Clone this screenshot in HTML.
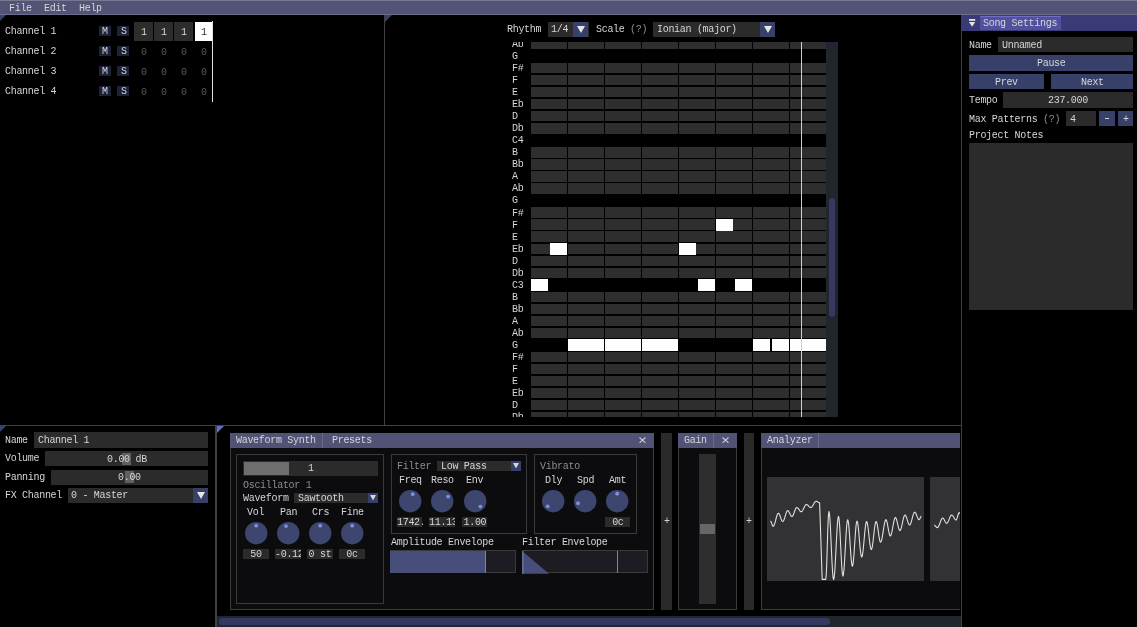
<!DOCTYPE html><html><head><meta charset="utf-8"><style>
html,body{margin:0;padding:0;background:#000;width:1137px;height:627px;overflow:hidden;position:relative}
div{position:absolute}
.t{font-family:"Liberation Mono",monospace;font-size:10px;letter-spacing:-0.3px;line-height:10px;white-space:pre;will-change:transform}
svg{position:absolute}
</style></head><body>
<div style="left:0px;top:0px;width:1137px;height:15px;background:#535375;"></div>
<div style="left:0px;top:0px;width:1137px;height:1px;background:#77778f;"></div>
<div style="left:0px;top:14px;width:1137px;height:1px;background:#6c6c8c;"></div>
<div class="t" style="left:8.5px;top:3.6999999999999993px;color:#d6d6d6;">File</div>
<div class="t" style="left:43.7px;top:3.6999999999999993px;color:#d6d6d6;">Edit</div>
<div class="t" style="left:78.9px;top:3.6999999999999993px;color:#d6d6d6;">Help</div>
<div style="left:383.7px;top:15px;width:1.5px;height:410px;background:#404040;"></div>
<div style="left:960.8px;top:15px;width:1.5px;height:612px;background:#404040;"></div>
<div style="left:0px;top:424.5px;width:961px;height:1.5px;background:#404040;"></div>
<div style="left:215.4px;top:426px;width:1.5px;height:201px;background:#404040;"></div>
<svg style="position:absolute;left:0px;top:15px" width="6" height="6"><polygon points="0,0 6,0 0,6" fill="#36426a"/></svg>
<svg style="position:absolute;left:385px;top:15px" width="7" height="7"><polygon points="0,0 7,0 0,7" fill="#36426a"/></svg>
<svg style="position:absolute;left:0px;top:426px" width="6" height="6"><polygon points="0,0 6,0 0,6" fill="#36426a"/></svg>
<svg style="position:absolute;left:217px;top:426px" width="7" height="7"><polygon points="0,0 7,0 0,7" fill="#6070c8"/></svg>
<div class="t" style="left:5.1px;top:27.0px;color:#d6d6d6;">Channel 1</div>
<div style="left:99px;top:25.8px;width:12px;height:10.2px;background:#1c2238;"></div>
<div class="t" style="left:101.5px;top:27.0px;color:#d6d6d6;">M</div>
<div style="left:117.3px;top:25.8px;width:12.2px;height:10.2px;background:#1c2238;"></div>
<div class="t" style="left:120.5px;top:27.0px;color:#d6d6d6;">S</div>
<div style="left:134.1px;top:22.4px;width:18.5px;height:18.4px;background:#2d2d2d;"></div>
<div class="t" style="left:140.5px;top:28px;color:#d6d6d6;">1</div>
<div style="left:154.2px;top:22.4px;width:18.5px;height:18.4px;background:#2d2d2d;"></div>
<div class="t" style="left:160.6px;top:28px;color:#d6d6d6;">1</div>
<div style="left:174.3px;top:22.4px;width:18.5px;height:18.4px;background:#2d2d2d;"></div>
<div class="t" style="left:180.7px;top:28px;color:#d6d6d6;">1</div>
<div style="left:194.6px;top:21.9px;width:18.4px;height:18.9px;background:#ffffff;"></div>
<div class="t" style="left:201.0px;top:28px;color:#303030;">1</div>
<div class="t" style="left:5.1px;top:47.07px;color:#d6d6d6;">Channel 2</div>
<div style="left:99px;top:45.870000000000005px;width:12px;height:10.2px;background:#1c2238;"></div>
<div class="t" style="left:101.5px;top:47.07px;color:#d6d6d6;">M</div>
<div style="left:117.3px;top:45.870000000000005px;width:12.2px;height:10.2px;background:#1c2238;"></div>
<div class="t" style="left:120.5px;top:47.07px;color:#d6d6d6;">S</div>
<div class="t" style="left:140.5px;top:48.07px;color:#5a5a5a;">0</div>
<div class="t" style="left:160.6px;top:48.07px;color:#5a5a5a;">0</div>
<div class="t" style="left:180.7px;top:48.07px;color:#5a5a5a;">0</div>
<div class="t" style="left:200.8px;top:48.07px;color:#5a5a5a;">0</div>
<div class="t" style="left:5.1px;top:67.14px;color:#d6d6d6;">Channel 3</div>
<div style="left:99px;top:65.94px;width:12px;height:10.2px;background:#1c2238;"></div>
<div class="t" style="left:101.5px;top:67.14px;color:#d6d6d6;">M</div>
<div style="left:117.3px;top:65.94px;width:12.2px;height:10.2px;background:#1c2238;"></div>
<div class="t" style="left:120.5px;top:67.14px;color:#d6d6d6;">S</div>
<div class="t" style="left:140.5px;top:68.14px;color:#5a5a5a;">0</div>
<div class="t" style="left:160.6px;top:68.14px;color:#5a5a5a;">0</div>
<div class="t" style="left:180.7px;top:68.14px;color:#5a5a5a;">0</div>
<div class="t" style="left:200.8px;top:68.14px;color:#5a5a5a;">0</div>
<div class="t" style="left:5.1px;top:87.21000000000001px;color:#d6d6d6;">Channel 4</div>
<div style="left:99px;top:86.01px;width:12px;height:10.2px;background:#1c2238;"></div>
<div class="t" style="left:101.5px;top:87.21000000000001px;color:#d6d6d6;">M</div>
<div style="left:117.3px;top:86.01px;width:12.2px;height:10.2px;background:#1c2238;"></div>
<div class="t" style="left:120.5px;top:87.21000000000001px;color:#d6d6d6;">S</div>
<div class="t" style="left:140.5px;top:88.21000000000001px;color:#5a5a5a;">0</div>
<div class="t" style="left:160.6px;top:88.21000000000001px;color:#5a5a5a;">0</div>
<div class="t" style="left:180.7px;top:88.21000000000001px;color:#5a5a5a;">0</div>
<div class="t" style="left:200.8px;top:88.21000000000001px;color:#5a5a5a;">0</div>
<div style="left:212px;top:21.2px;width:1.1px;height:80.8px;background:#e0e0e0;"></div>
<div class="t" style="left:507.4px;top:25.200000000000003px;color:#d6d6d6;">Rhythm</div>
<div style="left:547.5px;top:22.1px;width:41px;height:14.5px;background:#2b2b2b;"></div>
<div style="left:573.4px;top:22.1px;width:15px;height:14.5px;background:#374068;"></div>
<div class="t" style="left:551px;top:25.200000000000003px;color:#d6d6d6;">1/4</div>
<div class="t" style="left:595.5px;top:25.200000000000003px;color:#d6d6d6;">Scale</div>
<div class="t" style="left:629.5px;top:25.200000000000003px;color:#8e8e8e;">(?)</div>
<div style="left:653px;top:22.1px;width:122px;height:14.5px;background:#2b2b2b;"></div>
<div style="left:760px;top:22.1px;width:15px;height:14.5px;background:#374068;"></div>
<div class="t" style="left:657px;top:25.200000000000003px;color:#d6d6d6;">Ionian (major)</div>
<svg style="position:absolute;left:576.9px;top:25.9px" width="8" height="7"><polygon points="0,0 8,0 4.0,7" fill="#e6e6e6"/></svg>
<svg style="position:absolute;left:763.5px;top:25.9px" width="8" height="7"><polygon points="0,0 8,0 4.0,7" fill="#e6e6e6"/></svg>
<div style="left:500px;top:42px;width:338px;height:375px;overflow:hidden">
<div class="t" style="left:11.899999999999977px;top:-1.9000000000000004px;color:#d6d6d6;">Ab</div>
<div style="left:31.3px;top:-3.0px;width:35.7px;height:10.3px;background:#2e2e2e;"></div>
<div style="left:68.3px;top:-3.0px;width:35.7px;height:10.3px;background:#2e2e2e;"></div>
<div style="left:105.3px;top:-3.0px;width:35.7px;height:10.3px;background:#2e2e2e;"></div>
<div style="left:142.3px;top:-3.0px;width:35.7px;height:10.3px;background:#2e2e2e;"></div>
<div style="left:179.3px;top:-3.0px;width:35.7px;height:10.3px;background:#2e2e2e;"></div>
<div style="left:216.3px;top:-3.0px;width:35.7px;height:10.3px;background:#2e2e2e;"></div>
<div style="left:253.3px;top:-3.0px;width:35.7px;height:10.3px;background:#2e2e2e;"></div>
<div style="left:290.3px;top:-3.0px;width:35.7px;height:10.3px;background:#2e2e2e;"></div>
<div class="t" style="left:11.899999999999977px;top:10.129999999999999px;color:#d6d6d6;">G</div>
<div class="t" style="left:11.899999999999977px;top:22.159999999999997px;color:#d6d6d6;">F#</div>
<div style="left:31.3px;top:21.06px;width:35.7px;height:10.3px;background:#2e2e2e;"></div>
<div style="left:68.3px;top:21.06px;width:35.7px;height:10.3px;background:#2e2e2e;"></div>
<div style="left:105.3px;top:21.06px;width:35.7px;height:10.3px;background:#2e2e2e;"></div>
<div style="left:142.3px;top:21.06px;width:35.7px;height:10.3px;background:#2e2e2e;"></div>
<div style="left:179.3px;top:21.06px;width:35.7px;height:10.3px;background:#2e2e2e;"></div>
<div style="left:216.3px;top:21.06px;width:35.7px;height:10.3px;background:#2e2e2e;"></div>
<div style="left:253.3px;top:21.06px;width:35.7px;height:10.3px;background:#2e2e2e;"></div>
<div style="left:290.3px;top:21.06px;width:35.7px;height:10.3px;background:#2e2e2e;"></div>
<div class="t" style="left:11.899999999999977px;top:34.19px;color:#d6d6d6;">F</div>
<div style="left:31.3px;top:33.09px;width:35.7px;height:10.3px;background:#2e2e2e;"></div>
<div style="left:68.3px;top:33.09px;width:35.7px;height:10.3px;background:#2e2e2e;"></div>
<div style="left:105.3px;top:33.09px;width:35.7px;height:10.3px;background:#2e2e2e;"></div>
<div style="left:142.3px;top:33.09px;width:35.7px;height:10.3px;background:#2e2e2e;"></div>
<div style="left:179.3px;top:33.09px;width:35.7px;height:10.3px;background:#2e2e2e;"></div>
<div style="left:216.3px;top:33.09px;width:35.7px;height:10.3px;background:#2e2e2e;"></div>
<div style="left:253.3px;top:33.09px;width:35.7px;height:10.3px;background:#2e2e2e;"></div>
<div style="left:290.3px;top:33.09px;width:35.7px;height:10.3px;background:#2e2e2e;"></div>
<div class="t" style="left:11.899999999999977px;top:46.22px;color:#d6d6d6;">E</div>
<div style="left:31.3px;top:45.12px;width:35.7px;height:10.3px;background:#2e2e2e;"></div>
<div style="left:68.3px;top:45.12px;width:35.7px;height:10.3px;background:#2e2e2e;"></div>
<div style="left:105.3px;top:45.12px;width:35.7px;height:10.3px;background:#2e2e2e;"></div>
<div style="left:142.3px;top:45.12px;width:35.7px;height:10.3px;background:#2e2e2e;"></div>
<div style="left:179.3px;top:45.12px;width:35.7px;height:10.3px;background:#2e2e2e;"></div>
<div style="left:216.3px;top:45.12px;width:35.7px;height:10.3px;background:#2e2e2e;"></div>
<div style="left:253.3px;top:45.12px;width:35.7px;height:10.3px;background:#2e2e2e;"></div>
<div style="left:290.3px;top:45.12px;width:35.7px;height:10.3px;background:#2e2e2e;"></div>
<div class="t" style="left:11.899999999999977px;top:58.25px;color:#d6d6d6;">Eb</div>
<div style="left:31.3px;top:57.15px;width:35.7px;height:10.3px;background:#2e2e2e;"></div>
<div style="left:68.3px;top:57.15px;width:35.7px;height:10.3px;background:#2e2e2e;"></div>
<div style="left:105.3px;top:57.15px;width:35.7px;height:10.3px;background:#2e2e2e;"></div>
<div style="left:142.3px;top:57.15px;width:35.7px;height:10.3px;background:#2e2e2e;"></div>
<div style="left:179.3px;top:57.15px;width:35.7px;height:10.3px;background:#2e2e2e;"></div>
<div style="left:216.3px;top:57.15px;width:35.7px;height:10.3px;background:#2e2e2e;"></div>
<div style="left:253.3px;top:57.15px;width:35.7px;height:10.3px;background:#2e2e2e;"></div>
<div style="left:290.3px;top:57.15px;width:35.7px;height:10.3px;background:#2e2e2e;"></div>
<div class="t" style="left:11.899999999999977px;top:70.27999999999999px;color:#d6d6d6;">D</div>
<div style="left:31.3px;top:69.18px;width:35.7px;height:10.3px;background:#2e2e2e;"></div>
<div style="left:68.3px;top:69.18px;width:35.7px;height:10.3px;background:#2e2e2e;"></div>
<div style="left:105.3px;top:69.18px;width:35.7px;height:10.3px;background:#2e2e2e;"></div>
<div style="left:142.3px;top:69.18px;width:35.7px;height:10.3px;background:#2e2e2e;"></div>
<div style="left:179.3px;top:69.18px;width:35.7px;height:10.3px;background:#2e2e2e;"></div>
<div style="left:216.3px;top:69.18px;width:35.7px;height:10.3px;background:#2e2e2e;"></div>
<div style="left:253.3px;top:69.18px;width:35.7px;height:10.3px;background:#2e2e2e;"></div>
<div style="left:290.3px;top:69.18px;width:35.7px;height:10.3px;background:#2e2e2e;"></div>
<div class="t" style="left:11.899999999999977px;top:82.30999999999999px;color:#d6d6d6;">Db</div>
<div style="left:31.3px;top:81.21px;width:35.7px;height:10.3px;background:#2e2e2e;"></div>
<div style="left:68.3px;top:81.21px;width:35.7px;height:10.3px;background:#2e2e2e;"></div>
<div style="left:105.3px;top:81.21px;width:35.7px;height:10.3px;background:#2e2e2e;"></div>
<div style="left:142.3px;top:81.21px;width:35.7px;height:10.3px;background:#2e2e2e;"></div>
<div style="left:179.3px;top:81.21px;width:35.7px;height:10.3px;background:#2e2e2e;"></div>
<div style="left:216.3px;top:81.21px;width:35.7px;height:10.3px;background:#2e2e2e;"></div>
<div style="left:253.3px;top:81.21px;width:35.7px;height:10.3px;background:#2e2e2e;"></div>
<div style="left:290.3px;top:81.21px;width:35.7px;height:10.3px;background:#2e2e2e;"></div>
<div class="t" style="left:11.899999999999977px;top:94.33999999999999px;color:#d6d6d6;">C4</div>
<div class="t" style="left:11.899999999999977px;top:106.36999999999999px;color:#d6d6d6;">B</div>
<div style="left:31.3px;top:105.27px;width:35.7px;height:10.3px;background:#2e2e2e;"></div>
<div style="left:68.3px;top:105.27px;width:35.7px;height:10.3px;background:#2e2e2e;"></div>
<div style="left:105.3px;top:105.27px;width:35.7px;height:10.3px;background:#2e2e2e;"></div>
<div style="left:142.3px;top:105.27px;width:35.7px;height:10.3px;background:#2e2e2e;"></div>
<div style="left:179.3px;top:105.27px;width:35.7px;height:10.3px;background:#2e2e2e;"></div>
<div style="left:216.3px;top:105.27px;width:35.7px;height:10.3px;background:#2e2e2e;"></div>
<div style="left:253.3px;top:105.27px;width:35.7px;height:10.3px;background:#2e2e2e;"></div>
<div style="left:290.3px;top:105.27px;width:35.7px;height:10.3px;background:#2e2e2e;"></div>
<div class="t" style="left:11.899999999999977px;top:118.39999999999999px;color:#d6d6d6;">Bb</div>
<div style="left:31.3px;top:117.3px;width:35.7px;height:10.3px;background:#2e2e2e;"></div>
<div style="left:68.3px;top:117.3px;width:35.7px;height:10.3px;background:#2e2e2e;"></div>
<div style="left:105.3px;top:117.3px;width:35.7px;height:10.3px;background:#2e2e2e;"></div>
<div style="left:142.3px;top:117.3px;width:35.7px;height:10.3px;background:#2e2e2e;"></div>
<div style="left:179.3px;top:117.3px;width:35.7px;height:10.3px;background:#2e2e2e;"></div>
<div style="left:216.3px;top:117.3px;width:35.7px;height:10.3px;background:#2e2e2e;"></div>
<div style="left:253.3px;top:117.3px;width:35.7px;height:10.3px;background:#2e2e2e;"></div>
<div style="left:290.3px;top:117.3px;width:35.7px;height:10.3px;background:#2e2e2e;"></div>
<div class="t" style="left:11.899999999999977px;top:130.42999999999998px;color:#d6d6d6;">A</div>
<div style="left:31.3px;top:129.33px;width:35.7px;height:10.3px;background:#2e2e2e;"></div>
<div style="left:68.3px;top:129.33px;width:35.7px;height:10.3px;background:#2e2e2e;"></div>
<div style="left:105.3px;top:129.33px;width:35.7px;height:10.3px;background:#2e2e2e;"></div>
<div style="left:142.3px;top:129.33px;width:35.7px;height:10.3px;background:#2e2e2e;"></div>
<div style="left:179.3px;top:129.33px;width:35.7px;height:10.3px;background:#2e2e2e;"></div>
<div style="left:216.3px;top:129.33px;width:35.7px;height:10.3px;background:#2e2e2e;"></div>
<div style="left:253.3px;top:129.33px;width:35.7px;height:10.3px;background:#2e2e2e;"></div>
<div style="left:290.3px;top:129.33px;width:35.7px;height:10.3px;background:#2e2e2e;"></div>
<div class="t" style="left:11.899999999999977px;top:142.45999999999998px;color:#d6d6d6;">Ab</div>
<div style="left:31.3px;top:141.36px;width:35.7px;height:10.3px;background:#2e2e2e;"></div>
<div style="left:68.3px;top:141.36px;width:35.7px;height:10.3px;background:#2e2e2e;"></div>
<div style="left:105.3px;top:141.36px;width:35.7px;height:10.3px;background:#2e2e2e;"></div>
<div style="left:142.3px;top:141.36px;width:35.7px;height:10.3px;background:#2e2e2e;"></div>
<div style="left:179.3px;top:141.36px;width:35.7px;height:10.3px;background:#2e2e2e;"></div>
<div style="left:216.3px;top:141.36px;width:35.7px;height:10.3px;background:#2e2e2e;"></div>
<div style="left:253.3px;top:141.36px;width:35.7px;height:10.3px;background:#2e2e2e;"></div>
<div style="left:290.3px;top:141.36px;width:35.7px;height:10.3px;background:#2e2e2e;"></div>
<div class="t" style="left:11.899999999999977px;top:154.48999999999998px;color:#d6d6d6;">G</div>
<div class="t" style="left:11.899999999999977px;top:166.51999999999998px;color:#d6d6d6;">F#</div>
<div style="left:31.3px;top:165.42px;width:35.7px;height:10.3px;background:#2e2e2e;"></div>
<div style="left:68.3px;top:165.42px;width:35.7px;height:10.3px;background:#2e2e2e;"></div>
<div style="left:105.3px;top:165.42px;width:35.7px;height:10.3px;background:#2e2e2e;"></div>
<div style="left:142.3px;top:165.42px;width:35.7px;height:10.3px;background:#2e2e2e;"></div>
<div style="left:179.3px;top:165.42px;width:35.7px;height:10.3px;background:#2e2e2e;"></div>
<div style="left:216.3px;top:165.42px;width:35.7px;height:10.3px;background:#2e2e2e;"></div>
<div style="left:253.3px;top:165.42px;width:35.7px;height:10.3px;background:#2e2e2e;"></div>
<div style="left:290.3px;top:165.42px;width:35.7px;height:10.3px;background:#2e2e2e;"></div>
<div class="t" style="left:11.899999999999977px;top:178.54999999999998px;color:#d6d6d6;">F</div>
<div style="left:31.3px;top:177.45px;width:35.7px;height:10.3px;background:#2e2e2e;"></div>
<div style="left:68.3px;top:177.45px;width:35.7px;height:10.3px;background:#2e2e2e;"></div>
<div style="left:105.3px;top:177.45px;width:35.7px;height:10.3px;background:#2e2e2e;"></div>
<div style="left:142.3px;top:177.45px;width:35.7px;height:10.3px;background:#2e2e2e;"></div>
<div style="left:179.3px;top:177.45px;width:35.7px;height:10.3px;background:#2e2e2e;"></div>
<div style="left:216.3px;top:177.45px;width:35.7px;height:10.3px;background:#2e2e2e;"></div>
<div style="left:253.3px;top:177.45px;width:35.7px;height:10.3px;background:#2e2e2e;"></div>
<div style="left:290.3px;top:177.45px;width:35.7px;height:10.3px;background:#2e2e2e;"></div>
<div style="left:216.3px;top:176.6px;width:17.2px;height:12.0px;background:#ffffff;"></div>
<div class="t" style="left:11.899999999999977px;top:190.57999999999998px;color:#d6d6d6;">E</div>
<div style="left:31.3px;top:189.48px;width:35.7px;height:10.3px;background:#2e2e2e;"></div>
<div style="left:68.3px;top:189.48px;width:35.7px;height:10.3px;background:#2e2e2e;"></div>
<div style="left:105.3px;top:189.48px;width:35.7px;height:10.3px;background:#2e2e2e;"></div>
<div style="left:142.3px;top:189.48px;width:35.7px;height:10.3px;background:#2e2e2e;"></div>
<div style="left:179.3px;top:189.48px;width:35.7px;height:10.3px;background:#2e2e2e;"></div>
<div style="left:216.3px;top:189.48px;width:35.7px;height:10.3px;background:#2e2e2e;"></div>
<div style="left:253.3px;top:189.48px;width:35.7px;height:10.3px;background:#2e2e2e;"></div>
<div style="left:290.3px;top:189.48px;width:35.7px;height:10.3px;background:#2e2e2e;"></div>
<div class="t" style="left:11.899999999999977px;top:202.60999999999999px;color:#d6d6d6;">Eb</div>
<div style="left:31.3px;top:201.51px;width:35.7px;height:10.3px;background:#2e2e2e;"></div>
<div style="left:68.3px;top:201.51px;width:35.7px;height:10.3px;background:#2e2e2e;"></div>
<div style="left:105.3px;top:201.51px;width:35.7px;height:10.3px;background:#2e2e2e;"></div>
<div style="left:142.3px;top:201.51px;width:35.7px;height:10.3px;background:#2e2e2e;"></div>
<div style="left:179.3px;top:201.51px;width:35.7px;height:10.3px;background:#2e2e2e;"></div>
<div style="left:216.3px;top:201.51px;width:35.7px;height:10.3px;background:#2e2e2e;"></div>
<div style="left:253.3px;top:201.51px;width:35.7px;height:10.3px;background:#2e2e2e;"></div>
<div style="left:290.3px;top:201.51px;width:35.7px;height:10.3px;background:#2e2e2e;"></div>
<div style="left:49.7px;top:200.66px;width:17.2px;height:12.0px;background:#ffffff;"></div>
<div style="left:179.3px;top:200.66px;width:17.2px;height:12.0px;background:#ffffff;"></div>
<div class="t" style="left:11.899999999999977px;top:214.64px;color:#d6d6d6;">D</div>
<div style="left:31.3px;top:213.54px;width:35.7px;height:10.3px;background:#2e2e2e;"></div>
<div style="left:68.3px;top:213.54px;width:35.7px;height:10.3px;background:#2e2e2e;"></div>
<div style="left:105.3px;top:213.54px;width:35.7px;height:10.3px;background:#2e2e2e;"></div>
<div style="left:142.3px;top:213.54px;width:35.7px;height:10.3px;background:#2e2e2e;"></div>
<div style="left:179.3px;top:213.54px;width:35.7px;height:10.3px;background:#2e2e2e;"></div>
<div style="left:216.3px;top:213.54px;width:35.7px;height:10.3px;background:#2e2e2e;"></div>
<div style="left:253.3px;top:213.54px;width:35.7px;height:10.3px;background:#2e2e2e;"></div>
<div style="left:290.3px;top:213.54px;width:35.7px;height:10.3px;background:#2e2e2e;"></div>
<div class="t" style="left:11.899999999999977px;top:226.67px;color:#d6d6d6;">Db</div>
<div style="left:31.3px;top:225.57px;width:35.7px;height:10.3px;background:#2e2e2e;"></div>
<div style="left:68.3px;top:225.57px;width:35.7px;height:10.3px;background:#2e2e2e;"></div>
<div style="left:105.3px;top:225.57px;width:35.7px;height:10.3px;background:#2e2e2e;"></div>
<div style="left:142.3px;top:225.57px;width:35.7px;height:10.3px;background:#2e2e2e;"></div>
<div style="left:179.3px;top:225.57px;width:35.7px;height:10.3px;background:#2e2e2e;"></div>
<div style="left:216.3px;top:225.57px;width:35.7px;height:10.3px;background:#2e2e2e;"></div>
<div style="left:253.3px;top:225.57px;width:35.7px;height:10.3px;background:#2e2e2e;"></div>
<div style="left:290.3px;top:225.57px;width:35.7px;height:10.3px;background:#2e2e2e;"></div>
<div class="t" style="left:11.899999999999977px;top:238.7px;color:#d6d6d6;">C3</div>
<div style="left:31.3px;top:236.75px;width:17.2px;height:12.0px;background:#ffffff;"></div>
<div style="left:197.7px;top:236.75px;width:17.2px;height:12.0px;background:#ffffff;"></div>
<div style="left:234.7px;top:236.75px;width:17.2px;height:12.0px;background:#ffffff;"></div>
<div class="t" style="left:11.899999999999977px;top:250.73000000000002px;color:#d6d6d6;">B</div>
<div style="left:31.3px;top:249.63px;width:35.7px;height:10.3px;background:#2e2e2e;"></div>
<div style="left:68.3px;top:249.63px;width:35.7px;height:10.3px;background:#2e2e2e;"></div>
<div style="left:105.3px;top:249.63px;width:35.7px;height:10.3px;background:#2e2e2e;"></div>
<div style="left:142.3px;top:249.63px;width:35.7px;height:10.3px;background:#2e2e2e;"></div>
<div style="left:179.3px;top:249.63px;width:35.7px;height:10.3px;background:#2e2e2e;"></div>
<div style="left:216.3px;top:249.63px;width:35.7px;height:10.3px;background:#2e2e2e;"></div>
<div style="left:253.3px;top:249.63px;width:35.7px;height:10.3px;background:#2e2e2e;"></div>
<div style="left:290.3px;top:249.63px;width:35.7px;height:10.3px;background:#2e2e2e;"></div>
<div class="t" style="left:11.899999999999977px;top:262.76px;color:#d6d6d6;">Bb</div>
<div style="left:31.3px;top:261.66px;width:35.7px;height:10.3px;background:#2e2e2e;"></div>
<div style="left:68.3px;top:261.66px;width:35.7px;height:10.3px;background:#2e2e2e;"></div>
<div style="left:105.3px;top:261.66px;width:35.7px;height:10.3px;background:#2e2e2e;"></div>
<div style="left:142.3px;top:261.66px;width:35.7px;height:10.3px;background:#2e2e2e;"></div>
<div style="left:179.3px;top:261.66px;width:35.7px;height:10.3px;background:#2e2e2e;"></div>
<div style="left:216.3px;top:261.66px;width:35.7px;height:10.3px;background:#2e2e2e;"></div>
<div style="left:253.3px;top:261.66px;width:35.7px;height:10.3px;background:#2e2e2e;"></div>
<div style="left:290.3px;top:261.66px;width:35.7px;height:10.3px;background:#2e2e2e;"></div>
<div class="t" style="left:11.899999999999977px;top:274.79px;color:#d6d6d6;">A</div>
<div style="left:31.3px;top:273.69px;width:35.7px;height:10.3px;background:#2e2e2e;"></div>
<div style="left:68.3px;top:273.69px;width:35.7px;height:10.3px;background:#2e2e2e;"></div>
<div style="left:105.3px;top:273.69px;width:35.7px;height:10.3px;background:#2e2e2e;"></div>
<div style="left:142.3px;top:273.69px;width:35.7px;height:10.3px;background:#2e2e2e;"></div>
<div style="left:179.3px;top:273.69px;width:35.7px;height:10.3px;background:#2e2e2e;"></div>
<div style="left:216.3px;top:273.69px;width:35.7px;height:10.3px;background:#2e2e2e;"></div>
<div style="left:253.3px;top:273.69px;width:35.7px;height:10.3px;background:#2e2e2e;"></div>
<div style="left:290.3px;top:273.69px;width:35.7px;height:10.3px;background:#2e2e2e;"></div>
<div class="t" style="left:11.899999999999977px;top:286.82px;color:#d6d6d6;">Ab</div>
<div style="left:31.3px;top:285.72px;width:35.7px;height:10.3px;background:#2e2e2e;"></div>
<div style="left:68.3px;top:285.72px;width:35.7px;height:10.3px;background:#2e2e2e;"></div>
<div style="left:105.3px;top:285.72px;width:35.7px;height:10.3px;background:#2e2e2e;"></div>
<div style="left:142.3px;top:285.72px;width:35.7px;height:10.3px;background:#2e2e2e;"></div>
<div style="left:179.3px;top:285.72px;width:35.7px;height:10.3px;background:#2e2e2e;"></div>
<div style="left:216.3px;top:285.72px;width:35.7px;height:10.3px;background:#2e2e2e;"></div>
<div style="left:253.3px;top:285.72px;width:35.7px;height:10.3px;background:#2e2e2e;"></div>
<div style="left:290.3px;top:285.72px;width:35.7px;height:10.3px;background:#2e2e2e;"></div>
<div class="t" style="left:11.899999999999977px;top:298.85px;color:#d6d6d6;">G</div>
<div style="left:68.3px;top:296.9px;width:35.7px;height:12.0px;background:#ffffff;"></div>
<div style="left:105.3px;top:296.9px;width:35.7px;height:12.0px;background:#ffffff;"></div>
<div style="left:142.3px;top:296.9px;width:35.7px;height:12.0px;background:#ffffff;"></div>
<div style="left:253.3px;top:296.9px;width:17.2px;height:12.0px;background:#ffffff;"></div>
<div style="left:271.7px;top:296.9px;width:17.2px;height:12.0px;background:#ffffff;"></div>
<div style="left:290.3px;top:296.9px;width:35.7px;height:12.0px;background:#ffffff;"></div>
<div class="t" style="left:11.899999999999977px;top:310.88px;color:#d6d6d6;">F#</div>
<div style="left:31.3px;top:309.78px;width:35.7px;height:10.3px;background:#2e2e2e;"></div>
<div style="left:68.3px;top:309.78px;width:35.7px;height:10.3px;background:#2e2e2e;"></div>
<div style="left:105.3px;top:309.78px;width:35.7px;height:10.3px;background:#2e2e2e;"></div>
<div style="left:142.3px;top:309.78px;width:35.7px;height:10.3px;background:#2e2e2e;"></div>
<div style="left:179.3px;top:309.78px;width:35.7px;height:10.3px;background:#2e2e2e;"></div>
<div style="left:216.3px;top:309.78px;width:35.7px;height:10.3px;background:#2e2e2e;"></div>
<div style="left:253.3px;top:309.78px;width:35.7px;height:10.3px;background:#2e2e2e;"></div>
<div style="left:290.3px;top:309.78px;width:35.7px;height:10.3px;background:#2e2e2e;"></div>
<div class="t" style="left:11.899999999999977px;top:322.91px;color:#d6d6d6;">F</div>
<div style="left:31.3px;top:321.81px;width:35.7px;height:10.3px;background:#2e2e2e;"></div>
<div style="left:68.3px;top:321.81px;width:35.7px;height:10.3px;background:#2e2e2e;"></div>
<div style="left:105.3px;top:321.81px;width:35.7px;height:10.3px;background:#2e2e2e;"></div>
<div style="left:142.3px;top:321.81px;width:35.7px;height:10.3px;background:#2e2e2e;"></div>
<div style="left:179.3px;top:321.81px;width:35.7px;height:10.3px;background:#2e2e2e;"></div>
<div style="left:216.3px;top:321.81px;width:35.7px;height:10.3px;background:#2e2e2e;"></div>
<div style="left:253.3px;top:321.81px;width:35.7px;height:10.3px;background:#2e2e2e;"></div>
<div style="left:290.3px;top:321.81px;width:35.7px;height:10.3px;background:#2e2e2e;"></div>
<div class="t" style="left:11.899999999999977px;top:334.94px;color:#d6d6d6;">E</div>
<div style="left:31.3px;top:333.84px;width:35.7px;height:10.3px;background:#2e2e2e;"></div>
<div style="left:68.3px;top:333.84px;width:35.7px;height:10.3px;background:#2e2e2e;"></div>
<div style="left:105.3px;top:333.84px;width:35.7px;height:10.3px;background:#2e2e2e;"></div>
<div style="left:142.3px;top:333.84px;width:35.7px;height:10.3px;background:#2e2e2e;"></div>
<div style="left:179.3px;top:333.84px;width:35.7px;height:10.3px;background:#2e2e2e;"></div>
<div style="left:216.3px;top:333.84px;width:35.7px;height:10.3px;background:#2e2e2e;"></div>
<div style="left:253.3px;top:333.84px;width:35.7px;height:10.3px;background:#2e2e2e;"></div>
<div style="left:290.3px;top:333.84px;width:35.7px;height:10.3px;background:#2e2e2e;"></div>
<div class="t" style="left:11.899999999999977px;top:346.97px;color:#d6d6d6;">Eb</div>
<div style="left:31.3px;top:345.87px;width:35.7px;height:10.3px;background:#2e2e2e;"></div>
<div style="left:68.3px;top:345.87px;width:35.7px;height:10.3px;background:#2e2e2e;"></div>
<div style="left:105.3px;top:345.87px;width:35.7px;height:10.3px;background:#2e2e2e;"></div>
<div style="left:142.3px;top:345.87px;width:35.7px;height:10.3px;background:#2e2e2e;"></div>
<div style="left:179.3px;top:345.87px;width:35.7px;height:10.3px;background:#2e2e2e;"></div>
<div style="left:216.3px;top:345.87px;width:35.7px;height:10.3px;background:#2e2e2e;"></div>
<div style="left:253.3px;top:345.87px;width:35.7px;height:10.3px;background:#2e2e2e;"></div>
<div style="left:290.3px;top:345.87px;width:35.7px;height:10.3px;background:#2e2e2e;"></div>
<div class="t" style="left:11.899999999999977px;top:359.0px;color:#d6d6d6;">D</div>
<div style="left:31.3px;top:357.9px;width:35.7px;height:10.3px;background:#2e2e2e;"></div>
<div style="left:68.3px;top:357.9px;width:35.7px;height:10.3px;background:#2e2e2e;"></div>
<div style="left:105.3px;top:357.9px;width:35.7px;height:10.3px;background:#2e2e2e;"></div>
<div style="left:142.3px;top:357.9px;width:35.7px;height:10.3px;background:#2e2e2e;"></div>
<div style="left:179.3px;top:357.9px;width:35.7px;height:10.3px;background:#2e2e2e;"></div>
<div style="left:216.3px;top:357.9px;width:35.7px;height:10.3px;background:#2e2e2e;"></div>
<div style="left:253.3px;top:357.9px;width:35.7px;height:10.3px;background:#2e2e2e;"></div>
<div style="left:290.3px;top:357.9px;width:35.7px;height:10.3px;background:#2e2e2e;"></div>
<div class="t" style="left:11.899999999999977px;top:371.03000000000003px;color:#d6d6d6;">Db</div>
<div style="left:31.3px;top:369.93px;width:35.7px;height:10.3px;background:#2e2e2e;"></div>
<div style="left:68.3px;top:369.93px;width:35.7px;height:10.3px;background:#2e2e2e;"></div>
<div style="left:105.3px;top:369.93px;width:35.7px;height:10.3px;background:#2e2e2e;"></div>
<div style="left:142.3px;top:369.93px;width:35.7px;height:10.3px;background:#2e2e2e;"></div>
<div style="left:179.3px;top:369.93px;width:35.7px;height:10.3px;background:#2e2e2e;"></div>
<div style="left:216.3px;top:369.93px;width:35.7px;height:10.3px;background:#2e2e2e;"></div>
<div style="left:253.3px;top:369.93px;width:35.7px;height:10.3px;background:#2e2e2e;"></div>
<div style="left:290.3px;top:369.93px;width:35.7px;height:10.3px;background:#2e2e2e;"></div>
<div class="t" style="left:11.899999999999977px;top:383.06px;color:#d6d6d6;">C2</div>
<div style="left:31.3px;top:381.96px;width:35.7px;height:10.3px;background:#2e2e2e;"></div>
<div style="left:68.3px;top:381.96px;width:35.7px;height:10.3px;background:#2e2e2e;"></div>
<div style="left:105.3px;top:381.96px;width:35.7px;height:10.3px;background:#2e2e2e;"></div>
<div style="left:142.3px;top:381.96px;width:35.7px;height:10.3px;background:#2e2e2e;"></div>
<div style="left:179.3px;top:381.96px;width:35.7px;height:10.3px;background:#2e2e2e;"></div>
<div style="left:216.3px;top:381.96px;width:35.7px;height:10.3px;background:#2e2e2e;"></div>
<div style="left:253.3px;top:381.96px;width:35.7px;height:10.3px;background:#2e2e2e;"></div>
<div style="left:290.3px;top:381.96px;width:35.7px;height:10.3px;background:#2e2e2e;"></div>
<div style="left:301.20000000000005px;top:0px;width:1.1px;height:375px;background:#d0d0d0;"></div>
<div style="left:326.29999999999995px;top:0px;width:11.5px;height:375px;background:#1f262e;"></div>
<div style="left:329.1px;top:156.1px;width:6.3px;height:119.4px;background:#36395f;border-radius:3.1px;"></div>
</div>
<div style="left:962.3px;top:15.2px;width:175px;height:15.6px;background:#3a3a76;"></div>
<div style="left:980px;top:15.9px;width:80.6px;height:14.1px;background:#5151a0;"></div>
<div style="left:980px;top:15.9px;width:80.6px;height:1.1px;background:#6e6ec4;"></div>
<svg style="position:absolute;left:968.8px;top:19px" width="7" height="8"><rect x="0" y="0" width="6.2" height="1.8" fill="#e6e6e6"/><polygon points="0,3 6.2,3 3.1,7.8" fill="#e6e6e6"/></svg>
<div class="t" style="left:983.4px;top:19px;color:#d6d6d6;">Song Settings</div>
<div class="t" style="left:969px;top:41px;color:#d6d6d6;">Name</div>
<div style="left:998px;top:36.8px;width:135.2px;height:15.2px;background:#2b2b2b;"></div>
<div class="t" style="left:1001.5px;top:41px;color:#d6d6d6;">Unnamed</div>
<div style="left:969px;top:55.4px;width:164.2px;height:15.4px;background:#374068;"></div>
<div class="t" style="left:1036.75px;top:59px;color:#d6d6d6;">Pause</div>
<div style="left:969px;top:74.1px;width:75.1px;height:15.2px;background:#374068;"></div>
<div class="t" style="left:995.3px;top:78px;color:#d6d6d6;">Prev</div>
<div style="left:1051px;top:74.1px;width:82.2px;height:15.2px;background:#374068;"></div>
<div class="t" style="left:1080.6px;top:78px;color:#d6d6d6;">Next</div>
<div class="t" style="left:969px;top:96px;color:#d6d6d6;">Tempo</div>
<div style="left:1003.2px;top:92.2px;width:129.8px;height:15.4px;background:#2b2b2b;"></div>
<div class="t" style="left:1048.05px;top:96px;color:#d6d6d6;">237.000</div>
<div class="t" style="left:969px;top:115px;color:#d6d6d6;">Max Patterns</div>
<div class="t" style="left:1043px;top:115px;color:#8e8e8e;">(?)</div>
<div style="left:1066.2px;top:111.2px;width:29.5px;height:15px;background:#2b2b2b;"></div>
<div class="t" style="left:1069.5px;top:115px;color:#d6d6d6;">4</div>
<div style="left:1099.2px;top:111.2px;width:15.5px;height:15px;background:#374068;"></div>
<div style="left:1104.8px;top:118px;width:4.5px;height:1.1px;background:#d6d6d6;"></div>
<div style="left:1117.6px;top:111.2px;width:15.6px;height:15px;background:#374068;"></div>
<div class="t" style="left:1122.55px;top:115px;color:#d6d6d6;">+</div>
<div class="t" style="left:969px;top:131px;color:#d6d6d6;">Project Notes</div>
<div style="left:969.1px;top:143.4px;width:164px;height:166.2px;background:#2b2b2b;"></div>
<div class="t" style="left:5px;top:435.7px;color:#d6d6d6;">Name</div>
<div style="left:33.8px;top:432.4px;width:174.3px;height:15.4px;background:#2b2b2b;"></div>
<div class="t" style="left:37.5px;top:435.7px;color:#d6d6d6;">Channel 1</div>
<div class="t" style="left:5px;top:454.3px;color:#d6d6d6;">Volume</div>
<div style="left:45px;top:450.7px;width:163px;height:15.3px;background:#2b2b2b;"></div>
<div style="left:121.5px;top:452.6px;width:9.4px;height:12px;background:#606060;"></div>
<div class="t" style="left:106.55px;top:455px;color:#d6d6d6;">0.00 dB</div>
<div class="t" style="left:5px;top:473px;color:#d6d6d6;">Panning</div>
<div style="left:50.8px;top:469.5px;width:157.2px;height:15.1px;background:#2b2b2b;"></div>
<div style="left:124.8px;top:470.9px;width:9.3px;height:12px;background:#606060;"></div>
<div class="t" style="left:118.0px;top:473px;color:#d6d6d6;">0.00</div>
<div class="t" style="left:5px;top:491.3px;color:#d6d6d6;">FX Channel</div>
<div style="left:67.5px;top:488px;width:140.5px;height:14.9px;background:#2b2b2b;"></div>
<div style="left:193.2px;top:488px;width:14.8px;height:14.9px;background:#374068;"></div>
<svg style="position:absolute;left:196.6px;top:491.9px" width="8" height="7"><polygon points="0,0 8,0 4.0,7" fill="#e6e6e6"/></svg>
<div class="t" style="left:71px;top:491.3px;color:#d6d6d6;">0 - Master</div>
<div style="left:230.3px;top:433px;width:423.8px;height:176.5px;background:#0c0c0f;box-sizing:border-box;border:1px solid #3c3c3c;"></div>
<div style="left:230.3px;top:433px;width:423.8px;height:14.7px;background:#525277;"></div>
<div style="left:322px;top:433px;width:1px;height:14.7px;background:#6a6a8a;"></div>
<div class="t" style="left:236px;top:435.7px;color:#d6d6d6;">Waveform Synth</div>
<div class="t" style="left:332px;top:435.7px;color:#d6d6d6;">Presets</div>
<svg style="position:absolute;left:639.2px;top:436.6px" width="7" height="6.3"><path d="M0.5,0.5 L6.5,5.8 M6.5,0.5 L0.5,5.8" stroke="#d0d0d0" stroke-width="1.1"/></svg>
<div style="left:236.4px;top:454px;width:148px;height:149.6px;background:transparent;box-sizing:border-box;border:1px solid #3a3a3a;"></div>
<div style="left:243.3px;top:460.7px;width:134.7px;height:15.2px;background:#2b2b2b;"></div>
<div style="left:244.3px;top:461.7px;width:45px;height:13.2px;background:#6e6e6e;"></div>
<div class="t" style="left:307.85px;top:464px;color:#d6d6d6;">1</div>
<div class="t" style="left:243px;top:480.7px;color:#8e8e8e;">Oscillator 1</div>
<div class="t" style="left:243px;top:493.5px;color:#d6d6d6;">Waveform</div>
<div style="left:294px;top:492.7px;width:84px;height:10.3px;background:#2b2b2b;"></div>
<div style="left:367.7px;top:492.7px;width:10.3px;height:10.3px;background:#374068;"></div>
<svg style="position:absolute;left:369.9px;top:495.15px" width="6" height="5.5"><polygon points="0,0 6,0 3.0,5.5" fill="#d6d6d6"/></svg>
<div class="t" style="left:297.5px;top:493.5px;color:#d6d6d6;">Sawtooth</div>
<div class="t" style="left:247.35px;top:507.5px;color:#d6d6d6;">Vol</div>
<svg style="position:absolute;left:243.70000000000002px;top:521.0px" width="24.4" height="24.4"><circle cx="12.2" cy="12.2" r="11.2" fill="#3d466f"/><circle cx="12.200000000000017" cy="4.7000000000000455" r="1.9" fill="#8090e0"/></svg>
<div style="left:242.7px;top:549px;width:26px;height:10.3px;background:#2b2b2b;"></div>
<div class="t" style="left:242.7px;top:549.65px;width:26px;height:10.3px;overflow:hidden;text-align:center;color:#d6d6d6">50</div>
<div class="t" style="left:279.5px;top:507.5px;color:#d6d6d6;">Pan</div>
<svg style="position:absolute;left:275.85px;top:521.0px" width="24.4" height="24.4"><circle cx="12.2" cy="12.2" r="11.2" fill="#3d466f"/><circle cx="10.007212214579454" cy="5.027714330277263" r="1.9" fill="#8090e0"/></svg>
<div style="left:274.84999999999997px;top:549px;width:26px;height:10.3px;background:#2b2b2b;"></div>
<div class="t" style="left:274.84999999999997px;top:549.65px;width:26px;height:10.3px;overflow:hidden;text-align:center;color:#d6d6d6">-0.12</div>
<div class="t" style="left:311.65px;top:507.5px;color:#d6d6d6;">Crs</div>
<svg style="position:absolute;left:308.0px;top:521.0px" width="24.4" height="24.4"><circle cx="12.2" cy="12.2" r="11.2" fill="#3d466f"/><circle cx="12.199999999999989" cy="4.7000000000000455" r="1.9" fill="#8090e0"/></svg>
<div style="left:307.0px;top:549px;width:26px;height:10.3px;background:#2b2b2b;"></div>
<div class="t" style="left:307.0px;top:549.65px;width:26px;height:10.3px;overflow:hidden;text-align:center;color:#d6d6d6">0 st</div>
<div class="t" style="left:340.95px;top:507.5px;color:#d6d6d6;">Fine</div>
<svg style="position:absolute;left:340.15000000000003px;top:521.0px" width="24.4" height="24.4"><circle cx="12.2" cy="12.2" r="11.2" fill="#3d466f"/><circle cx="12.199999999999989" cy="4.7000000000000455" r="1.9" fill="#8090e0"/></svg>
<div style="left:339.15px;top:549px;width:26px;height:10.3px;background:#2b2b2b;"></div>
<div class="t" style="left:339.15px;top:549.65px;width:26px;height:10.3px;overflow:hidden;text-align:center;color:#d6d6d6">0c</div>
<div style="left:391px;top:454.4px;width:136.3px;height:79.6px;background:transparent;box-sizing:border-box;border:1px solid #3a3a3a;"></div>
<div class="t" style="left:397px;top:461.8px;color:#8e8e8e;">Filter</div>
<div style="left:437.3px;top:460.9px;width:83.7px;height:9.7px;background:#2b2b2b;"></div>
<div style="left:510.5px;top:460.9px;width:10.5px;height:9.7px;background:#374068;"></div>
<svg style="position:absolute;left:512.7px;top:462.95px" width="6" height="5.5"><polygon points="0,0 6,0 3.0,5.5" fill="#d6d6d6"/></svg>
<div class="t" style="left:441px;top:461.8px;color:#d6d6d6;">Low Pass</div>
<div class="t" style="left:398.8px;top:475.5px;color:#d6d6d6;">Freq</div>
<svg style="position:absolute;left:398.0px;top:488.8px" width="24.4" height="24.4"><circle cx="12.2" cy="12.2" r="11.2" fill="#3d466f"/><circle cx="14.76515107494248" cy="5.1523053441056845" r="1.9" fill="#8090e0"/></svg>
<div style="left:396.7px;top:517.3px;width:25.8px;height:9.4px;background:#2b2b2b;"></div>
<div class="t" style="left:396.7px;top:517.5px;width:25.8px;height:9.4px;overflow:hidden;text-align:center;color:#d6d6d6">1742.</div>
<div class="t" style="left:431.05px;top:475.5px;color:#d6d6d6;">Reso</div>
<svg style="position:absolute;left:430.25px;top:488.8px" width="24.4" height="24.4"><circle cx="12.2" cy="12.2" r="11.2" fill="#3d466f"/><circle cx="18.110080652050385" cy="7.582538935057528" r="1.9" fill="#8090e0"/></svg>
<div style="left:429.09999999999997px;top:517.3px;width:25.8px;height:9.4px;background:#2b2b2b;"></div>
<div class="t" style="left:429.09999999999997px;top:517.5px;width:25.8px;height:9.4px;overflow:hidden;text-align:center;color:#d6d6d6">11.13</div>
<div class="t" style="left:466.15px;top:475.5px;color:#d6d6d6;">Env</div>
<svg style="position:absolute;left:462.5px;top:488.8px" width="24.4" height="24.4"><circle cx="12.2" cy="12.2" r="11.2" fill="#3d466f"/><circle cx="17.40993777844244" cy="17.595048502539953" r="1.9" fill="#8090e0"/></svg>
<div style="left:461.5px;top:517.3px;width:25.8px;height:9.4px;background:#2b2b2b;"></div>
<div class="t" style="left:461.5px;top:517.5px;width:25.8px;height:9.4px;overflow:hidden;text-align:center;color:#d6d6d6">1.00</div>
<div style="left:534.1px;top:454.4px;width:102.5px;height:79.6px;background:transparent;box-sizing:border-box;border:1px solid #3a3a3a;"></div>
<div class="t" style="left:540px;top:461.8px;color:#8e8e8e;">Vibrato</div>
<div class="t" style="left:544.55px;top:475.5px;color:#d6d6d6;">Dly</div>
<svg style="position:absolute;left:540.9px;top:488.8px" width="24.4" height="24.4"><circle cx="12.2" cy="12.2" r="11.2" fill="#3d466f"/><circle cx="6.714847237856247" cy="17.314987700468805" r="1.9" fill="#8090e0"/></svg>
<div class="t" style="left:576.8px;top:475.5px;color:#d6d6d6;">Spd</div>
<svg style="position:absolute;left:573.15px;top:488.8px" width="24.4" height="24.4"><circle cx="12.2" cy="12.2" r="11.2" fill="#3d466f"/><circle cx="4.990537280462604" cy="14.267280168627508" r="1.9" fill="#8090e0"/></svg>
<div class="t" style="left:609.05px;top:475.5px;color:#d6d6d6;">Amt</div>
<svg style="position:absolute;left:605.4px;top:488.8px" width="24.4" height="24.4"><circle cx="12.2" cy="12.2" r="11.2" fill="#3d466f"/><circle cx="12.200000000000045" cy="4.699999999999989" r="1.9" fill="#8090e0"/></svg>
<div style="left:604.6px;top:517.3px;width:25.7px;height:9.4px;background:#2b2b2b;"></div>
<div class="t" style="left:604.6px;top:517.5px;width:25.7px;height:9.4px;overflow:hidden;text-align:center;color:#d6d6d6">0c</div>
<div class="t" style="left:391px;top:537.7px;color:#d6d6d6;">Amplitude Envelope</div>
<div class="t" style="left:522.4px;top:537.7px;color:#d6d6d6;">Filter Envelope</div>
<div style="left:389.9px;top:550.3px;width:126px;height:23.1px;background:#1c1c22;box-sizing:border-box;border:1px solid #3a3a3a;"></div>
<div style="left:390.4px;top:550.8px;width:95.4px;height:22.1px;background:#484e7a;"></div>
<div style="left:485.3px;top:550.8px;width:1.2px;height:22.1px;background:#7a80c0;"></div>
<div style="left:521.9px;top:550.3px;width:126.1px;height:23.1px;background:#1c1c22;box-sizing:border-box;border:1px solid #3a3a3a;"></div>
<svg style="position:absolute;left:522px;top:550.5px" width="30" height="23"><polygon points="0.4,0.3 27,22.8 0.4,22.8" fill="#484e7a"/><line x1="0.9" y1="0" x2="0.9" y2="23" stroke="#7a80c0" stroke-width="1"/></svg>
<div style="left:616.8px;top:550.8px;width:1.2px;height:22.1px;background:#7a80c0;"></div>
<div style="left:661.2px;top:433px;width:10.4px;height:176.8px;background:#2a2a2a;"></div>
<div class="t" style="left:663.55px;top:517px;color:#d0d0d0;">+</div>
<div style="left:744px;top:433px;width:10.4px;height:176.8px;background:#2a2a2a;"></div>
<div class="t" style="left:746.35px;top:517px;color:#d0d0d0;">+</div>
<div style="left:678.2px;top:433px;width:59.2px;height:176.5px;background:#0c0c0f;box-sizing:border-box;border:1px solid #3c3c3c;"></div>
<div style="left:678.2px;top:433px;width:59.2px;height:14.7px;background:#525277;"></div>
<div style="left:713.3px;top:433px;width:1px;height:14.7px;background:#6a6a8a;"></div>
<div class="t" style="left:684px;top:435.7px;color:#d6d6d6;">Gain</div>
<svg style="position:absolute;left:722.1px;top:436.6px" width="7" height="6.3"><path d="M0.5,0.5 L6.5,5.8 M6.5,0.5 L0.5,5.8" stroke="#d0d0d0" stroke-width="1.1"/></svg>
<div style="left:698.8px;top:454px;width:17.7px;height:149.8px;background:#2e2e2e;"></div>
<div style="left:699.8px;top:523.8px;width:15.7px;height:10px;background:#666666;"></div>
<div style="left:760.8px;top:433px;width:199.7px;height:177px;overflow:hidden">
<div style="left:0px;top:0px;width:260px;height:176.5px;background:#0c0c0f;box-sizing:border-box;border:1px solid #3c3c3c;"></div>
<div style="left:0px;top:0px;width:260px;height:14.7px;background:#525277;"></div>
<div style="left:57.7px;top:0px;width:1px;height:14.7px;background:#6a6a8a;"></div>
<div class="t" style="left:6.5px;top:2.6999999999999993px;color:#d6d6d6;">Analyzer</div>
<div style="left:6.300000000000068px;top:44.10000000000002px;width:156.7px;height:104px;background:#323234;"></div>
<div style="left:169.10000000000002px;top:44.10000000000002px;width:60px;height:104px;background:#323234;"></div>
<svg style="left:0;top:0" width="200" height="177"><polyline fill="none" stroke="#e0e0e0" stroke-width="1.1" stroke-linejoin="round" points="9.50,88.00 10.02,88.52 10.54,89.87 11.06,91.53 11.58,92.88 12.10,93.40 12.63,93.08 13.16,92.14 13.69,90.68 14.22,88.84 14.75,86.80 15.28,84.76 15.81,82.92 16.34,81.46 16.87,80.52 17.40,80.20 17.94,80.52 18.48,81.42 19.01,82.76 19.55,84.35 20.09,85.94 20.62,87.28 21.16,88.18 21.70,88.50 22.20,88.23 22.70,87.46 23.20,86.25 23.70,84.73 24.20,83.05 24.70,81.37 25.20,79.85 25.70,78.64 26.20,77.87 26.70,77.60 27.23,77.83 27.75,78.48 28.28,79.45 28.80,80.60 29.33,81.75 29.85,82.72 30.38,83.37 30.90,83.60 31.44,83.33 31.99,82.54 32.53,81.33 33.08,79.84 33.62,78.26 34.17,76.78 34.71,75.56 35.26,74.77 35.80,74.50 36.35,74.66 36.90,75.13 37.45,75.83 38.00,76.65 38.55,77.47 39.10,78.17 39.65,78.64 40.20,78.80 40.72,78.62 41.24,78.10 41.76,77.30 42.28,76.28 42.80,75.15 43.32,74.02 43.84,73.00 44.36,72.20 44.88,71.68 45.40,71.50 45.95,71.61 46.50,71.94 47.05,72.43 47.60,73.00 48.15,73.57 48.70,74.06 49.25,74.39 49.80,74.50 50.33,74.35 50.86,73.91 51.39,73.22 51.92,72.36 52.45,71.40 52.98,70.44 53.51,69.58 54.04,68.89 54.57,68.45 55.10,68.30 55.60,68.37 56.10,68.56 56.60,68.84 57.10,69.16 57.60,69.44 58.10,69.63 58.60,69.70 61.20,146.40 64.70,146.40 64.70,146.40 65.23,141.85 65.77,129.42 66.30,112.45 66.83,95.48 67.37,83.05 67.90,78.50 68.42,80.56 68.94,86.48 69.47,95.55 69.99,106.68 70.51,118.52 71.03,129.65 71.56,138.72 72.08,144.64 72.60,146.70 73.14,144.79 73.69,139.30 74.23,130.88 74.78,120.55 75.32,109.55 75.87,99.23 76.41,90.80 76.96,85.31 77.50,83.40 78.05,85.68 78.60,92.16 79.15,101.86 79.70,113.30 80.25,124.74 80.80,134.44 81.35,140.92 81.90,143.20 82.43,141.50 82.97,136.59 83.50,129.08 84.03,119.86 84.57,110.04 85.10,100.83 85.63,93.31 86.17,88.40 86.70,86.70 87.22,88.10 87.74,92.14 88.27,98.33 88.79,105.91 89.31,113.99 89.83,121.58 90.36,127.76 90.88,131.80 91.40,133.20 91.91,131.84 92.42,127.92 92.93,121.93 93.44,114.57 93.96,106.73 94.47,99.38 94.98,93.38 95.49,89.46 96.00,88.10 96.52,89.19 97.04,92.31 97.57,97.10 98.09,102.97 98.61,109.23 99.13,115.10 99.66,119.89 100.18,123.01 100.70,124.10 101.24,123.03 101.79,119.94 102.33,115.20 102.88,109.39 103.42,103.21 103.97,97.40 104.51,92.66 105.06,89.57 105.60,88.50 106.12,89.35 106.64,91.79 107.17,95.52 107.69,100.11 108.21,104.99 108.73,109.58 109.26,113.31 109.78,115.75 110.30,116.60 110.83,115.75 111.37,113.31 111.90,109.58 112.43,104.99 112.97,100.11 113.50,95.52 114.03,91.79 114.57,89.35 115.10,88.50 115.60,89.12 116.10,90.92 116.60,93.67 117.10,97.05 117.60,100.65 118.10,104.02 118.60,106.78 119.10,108.58 119.60,109.20 120.13,108.65 120.66,107.05 121.19,104.56 121.72,101.43 122.25,97.95 122.78,94.47 123.31,91.34 123.84,88.85 124.37,87.25 124.90,86.70 125.45,87.32 126.00,89.09 126.55,91.73 127.10,94.85 127.65,97.97 128.20,100.61 128.75,102.38 129.30,103.00 129.81,102.55 130.32,101.23 130.83,99.19 131.34,96.61 131.85,93.75 132.36,90.89 132.87,88.31 133.38,86.27 133.89,84.95 134.40,84.50 134.90,84.90 135.40,86.03 135.90,87.77 136.40,89.91 136.90,92.19 137.40,94.33 137.90,96.07 138.40,97.20 138.90,97.60 139.41,97.22 139.92,96.11 140.43,94.38 140.94,92.21 141.45,89.80 141.96,87.39 142.47,85.22 142.98,83.49 143.49,82.38 144.00,82.00 144.51,82.30 145.02,83.17 145.53,84.50 146.04,86.13 146.56,87.87 147.07,89.50 147.58,90.83 148.09,91.70 148.60,92.00 149.11,91.69 149.62,90.78 150.13,89.36 150.64,87.58 151.15,85.60 151.66,83.62 152.17,81.84 152.68,80.42 153.19,79.51 153.70,79.20 154.25,79.49 154.80,80.30 155.35,81.51 155.90,82.95 156.45,84.39 157.00,85.60 157.55,86.41 158.10,86.70 158.65,86.19 159.20,84.95 159.75,83.71 160.30,83.20"/><polyline fill="none" stroke="#e0e0e0" stroke-width="1.1" points="173.10,92.30 173.65,92.45 174.20,92.88 174.75,93.45 175.30,94.02 175.85,94.45 176.40,94.60 176.93,94.37 177.46,93.68 177.99,92.62 178.52,91.28 179.05,89.80 179.58,88.32 180.11,86.98 180.64,85.92 181.17,85.23 181.70,85.00 182.20,85.20 182.70,85.78 183.20,86.64 183.70,87.65 184.20,88.66 184.70,89.52 185.20,90.10 185.70,90.30 186.20,90.10 186.70,89.51 187.20,88.59 187.70,87.43 188.20,86.15 188.70,84.87 189.20,83.71 189.70,82.79 190.20,82.20 190.70,82.00 191.24,82.19 191.78,82.73 192.31,83.54 192.85,84.50 193.39,85.46 193.92,86.27 194.46,86.81 195.00,87.00 195.53,86.51 196.07,85.18 196.60,83.35 197.13,81.53 197.67,80.19 198.20,79.70 198.70,79.92 199.20,80.52 199.70,81.35 200.20,82.17 200.70,82.78 201.20,83.00"/></svg>
</div>
<div style="left:217px;top:616px;width:744px;height:11px;background:#1f262e;"></div>
<div style="left:219.3px;top:618px;width:610.5px;height:6.5px;background:#36395f;border-radius:3.2px;"></div>
</body></html>
